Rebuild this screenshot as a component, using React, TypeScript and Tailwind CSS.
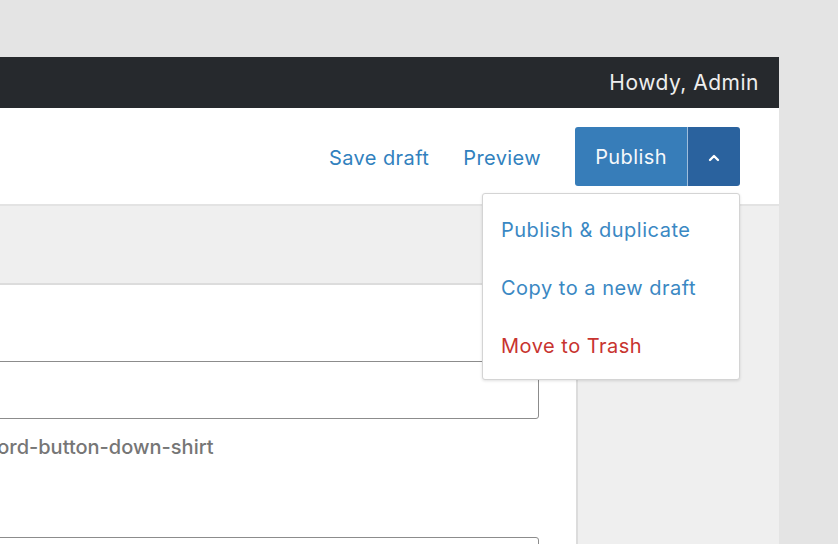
import { useState } from 'react'

function PublishButton() {
  const [open, setOpen] = useState(true)

  return (
    <div className="relative flex h-[59px]">
      <button className="w-[112px] h-full rounded-l-[3px] bg-[#377db9] pt-[2px] text-[20px] tracking-[0.4px] text-[#f5f8fb]">
        Publish
      </button>
      <button
        onClick={() => setOpen((prev) => !prev)}
        className="w-[53px] h-full rounded-r-[3px] border-l border-[#9fbedc] bg-[#2a629e] flex items-center justify-center pt-[3px]"
        aria-label="More publish options"
      >
        <svg className="w-[16px] h-[16px]" fill="none" viewBox="0 0 24 24" stroke="#ffffff" strokeWidth={3.5}>
          <path strokeLinecap="round" strokeLinejoin="round" d="M6 15l6-6 6 6" />
        </svg>
      </button>

      {open && (
        <div className="absolute right-0 top-[66px] w-[258px] h-[187px] bg-white border border-[#d4d4d4] rounded-[3px] shadow-[0_1px_3px_rgba(0,0,0,0.12)] z-50 pt-[7px]">
          <a href="#" className="flex items-center h-[58px] px-[18px] text-[20px] tracking-[0.5px] text-[#3a88c3]">
            Publish &amp; duplicate
          </a>
          <a href="#" className="flex items-center h-[58px] px-[18px] text-[20px] tracking-[0.5px] text-[#3a88c3]">
            Copy to a new draft
          </a>
          <a href="#" className="flex items-center h-[58px] px-[18px] text-[20px] tracking-[0.5px] text-[#c8342f]">
            Move to Trash
          </a>
        </div>
      )}
    </div>
  )
}

export default function App() {
  return (
    <div className="h-screen w-full overflow-hidden bg-[#e4e4e4] pt-[57px] font-['Inter','Noto_Sans',sans-serif]">
      <div className="-ml-[100px] w-[879px] h-full flex flex-col">
        {/* Admin bar */}
        <div className="h-[51px] shrink-0 bg-[#26292d] flex items-center justify-end pr-[20px] text-[21px] tracking-[0.5px] text-[#eeeeee]">
          Howdy, Admin
        </div>

        {/* Editor header */}
        <div className="h-[98px] shrink-0 bg-white border-b-2 border-[#e3e3e3] flex items-center justify-end gap-[34px] pr-[39px]">
          <a href="#" className="pt-[3px] text-[20px] tracking-[0.4px] text-[#3181be]">Save draft</a>
          <a href="#" className="pt-[3px] text-[20px] tracking-[0.4px] text-[#3181be]">Preview</a>
          <PublishButton />
        </div>

        {/* Body */}
        <div className="flex-1 bg-[#efefef] flex flex-col">
          <div className="h-[77px] shrink-0" />
          <div className="flex-1 w-[678px] bg-white border-t-2 border-r-2 border-[#dcdcdc] pl-[40px] pr-[37px] pt-[76px]">
            <div className="h-[58px] rounded-[3px] border-[1.5px] border-[#8c8c8c]" />
            <p className="mt-[16px] ml-[27px] text-[20px] leading-[24px] font-medium text-[#767676]">
              oxford-button-down-shirt
            </p>
            <div className="mt-[78px] h-[58px] rounded-[3px] border-[1.5px] border-[#8c8c8c]" />
          </div>
        </div>
      </div>
    </div>
  )
}
